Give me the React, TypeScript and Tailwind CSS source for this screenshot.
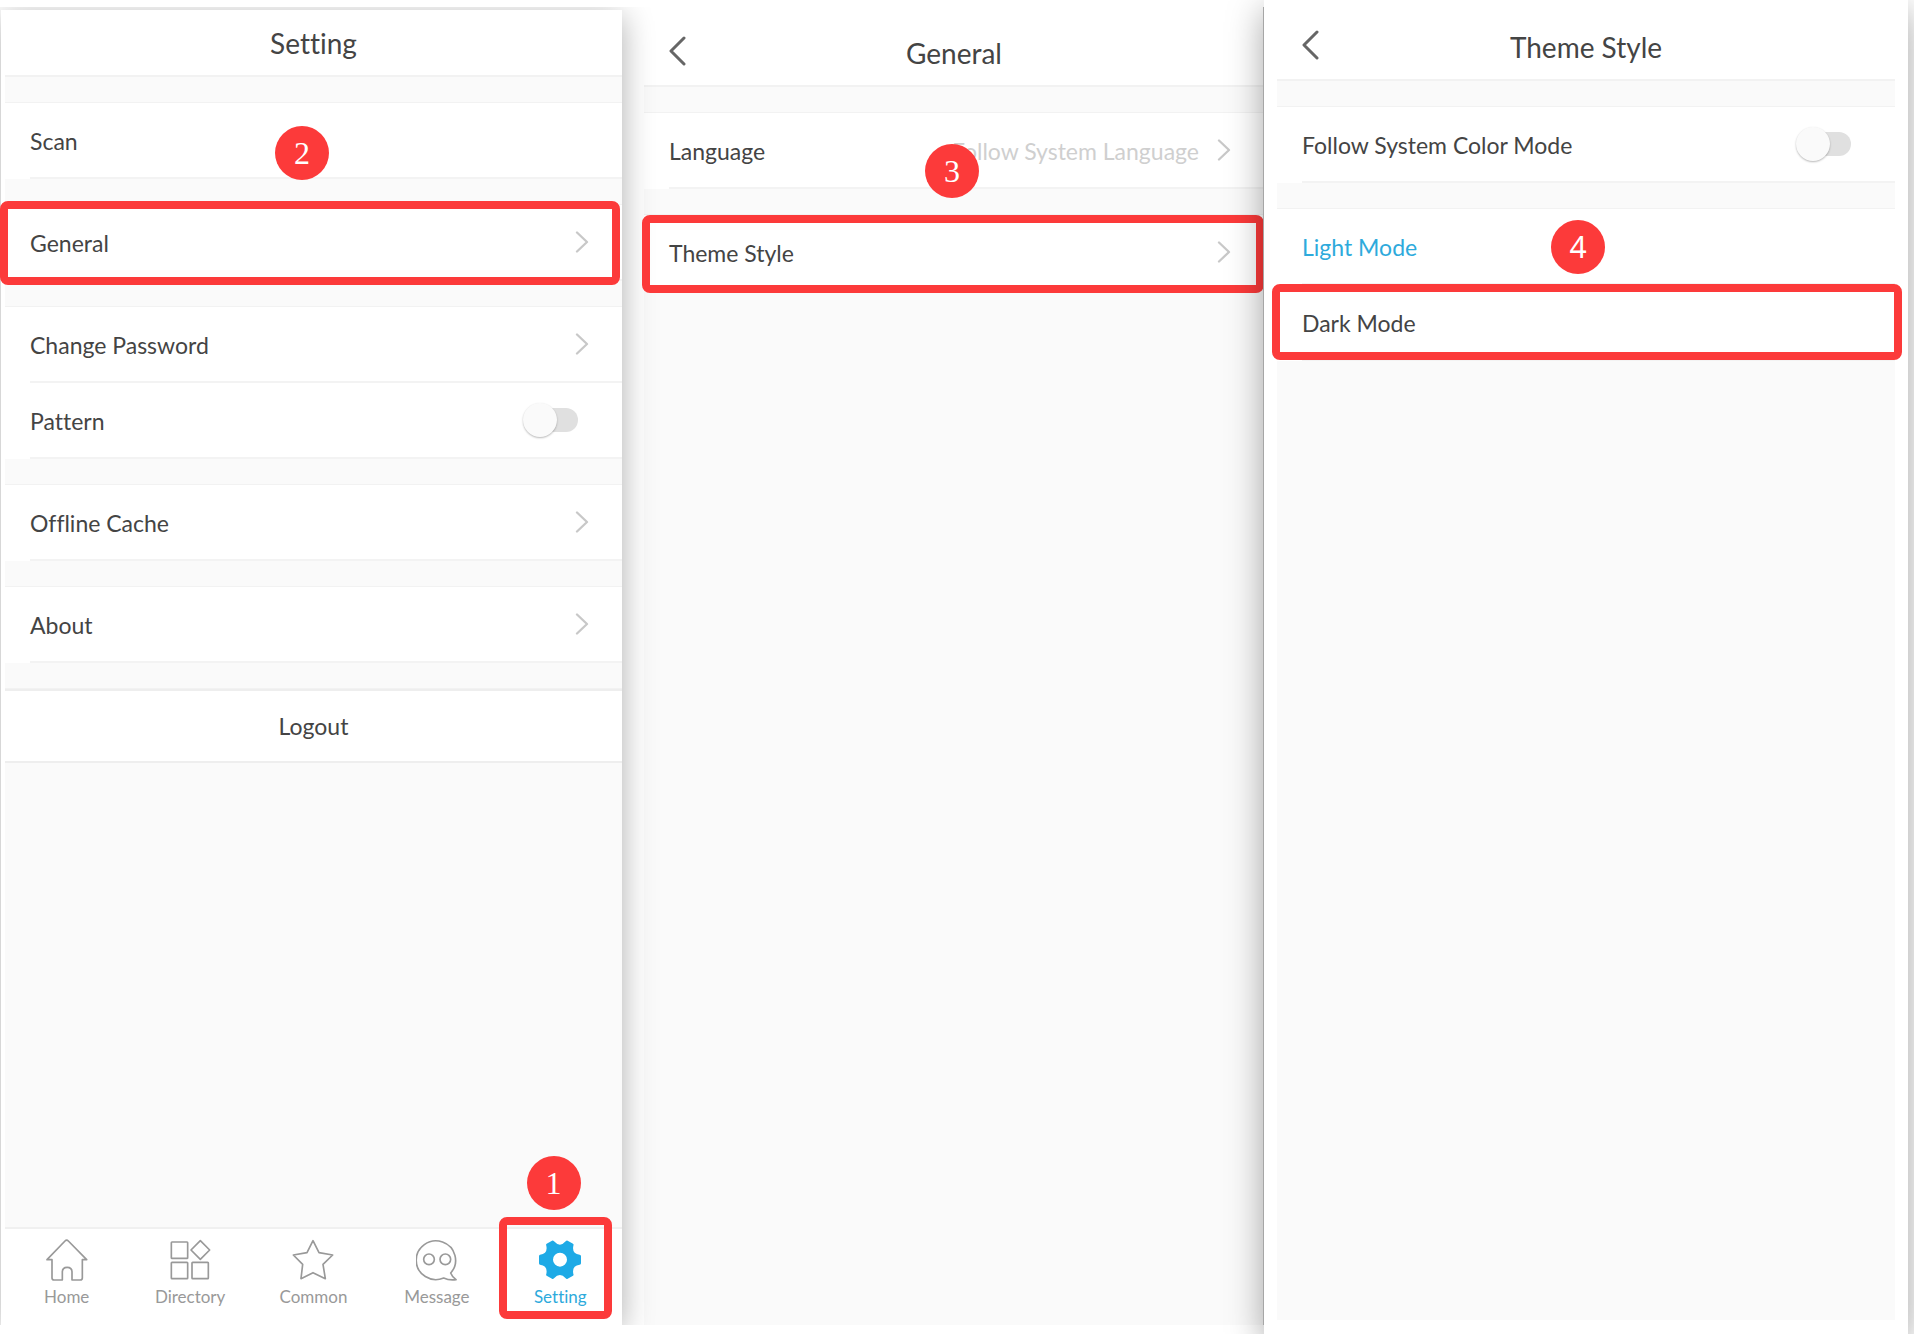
import type { ReactNode } from "react";

function ChevronRight() {
  return (
    <svg viewBox="0 0 14 22" className="h-[22px] w-[14px] shrink-0" fill="none" stroke="#c8c8c8" strokeWidth="2.3" strokeLinecap="round" strokeLinejoin="round" aria-hidden="true">
      <path d="M2 1.5 L12 11 L2 20.5" />
    </svg>
  );
}

function BackButton() {
  return (
    <button type="button" aria-label="Back" className="justify-self-start pb-1">
      <svg viewBox="0 0 18 30" className="block h-[30px] w-[18px]" fill="none" stroke="#666666" strokeWidth="3" strokeLinecap="round" strokeLinejoin="round" aria-hidden="true">
        <path d="M15 2 L2 15 L15 28" />
      </svg>
    </button>
  );
}

function Header({ title, back = false }: { title: string; back?: boolean }) {
  return (
    <header className="grid h-[67px] shrink-0 grid-cols-[1fr_auto_1fr] items-center border-b-2 border-[#f2f2f2] bg-white px-[25px]">
      {back ? <BackButton /> : <span />}
      <h2 className="text-[28px] leading-8">{title}</h2>
      <span />
    </header>
  );
}

function Gap() {
  return <div className="h-[26px] shrink-0 border-b border-[#f2f2f2]" />;
}

function Highlight({ className }: { className: string }) {
  return <span className={`pointer-events-none absolute z-10 rounded-lg border-8 border-[#fc3a3a] ${className}`} />;
}

function Step({ n, className, sans = false }: { n: number; className: string; sans?: boolean }) {
  return (
    <span
      className={`pointer-events-none absolute z-20 flex size-[54px] items-center justify-center rounded-full bg-[#fc3a3a] leading-none text-white ${
        sans ? "font-['Noto_Sans',sans-serif] text-[30px]" : "font-['Liberation_Serif',serif] text-[32px]"
      } ${className}`}
    >
      {n}
    </span>
  );
}

function Group({ children }: { children: ReactNode }) {
  return <div className="shrink-0 bg-white">{children}</div>;
}

type RowProps = { label: string; value?: string; arrow?: boolean; active?: boolean; children?: ReactNode };

function Row({ label, value, arrow = false, active = false, children }: RowProps) {
  return (
    <div className="relative pl-[25px]">
      <button type="button" className="flex h-[76px] w-full items-center justify-between border-b-2 border-[#f3f3f3] pr-[33px] text-left leading-8">
        <span className={active ? "pt-0.5 text-[#2eaadc]" : "pt-0.5"}>{label}</span>
        <span className="flex items-center gap-[18px] text-[#cfcfcf]">
          {value && <span className="pt-0.5">{value}</span>}
          {arrow && <ChevronRight />}
        </span>
      </button>
      {children}
    </div>
  );
}

function SwitchRow({ label }: { label: string }) {
  return (
    <div className="pl-[25px]">
      <label className="flex h-[76px] items-center justify-between border-b-2 border-[#f3f3f3] pr-11 leading-8">
        <span className="pt-0.5">{label}</span>
        <input
          type="checkbox"
          role="switch"
          className="relative h-6 w-[51px] appearance-none rounded-full bg-[#e0e0e0] before:absolute before:-top-[5px] before:-left-1 before:size-[34px] before:rounded-full before:bg-[#fafafa] before:shadow-[0_1px_2px_rgba(0,0,0,0.28)] before:content-['']"
        />
      </label>
    </div>
  );
}

const line = { fill: "none", stroke: "#999999", strokeWidth: 5, strokeLinejoin: "round", strokeLinecap: "round" } as const;

const tabs: { label: string; icon: ReactNode }[] = [
  {
    label: "Home",
    icon: <path {...line} d="M3 62 L57 6 Q62 1 67 6 L122 62 H109 V117 Q109 123 103 123 H78 V99 Q78 85 63.5 85 Q49 85 49 99 V123 H24 Q18 123 18 117 V62 Z" />,
  },
  {
    label: "Directory",
    icon: (
      <g {...line}>
        <rect x="7" y="9" width="49" height="49" rx="2" />
        <rect x="7" y="70" width="49" height="49" rx="2" />
        <rect x="69" y="70" width="49" height="49" rx="2" />
        <path d="M94 5 L122 33 L94 61 L66 33 Z" />
      </g>
    ),
  },
  {
    label: "Common",
    icon: <path {...line} d="M63 5 L81 41 L122 48 L93 76 L100 119 L63 101 L27 119 L32 76 L4 48 L45 41 Z" />,
  },
  {
    label: "Message",
    icon: (
      <g {...line}>
        <path d="M83 117 A59 58 0 1 1 104 102 Q108 113 120 122 Q100 125 83 117 Z" />
        <circle cx="39" cy="61" r="16" />
        <circle cx="88" cy="61" r="16" />
      </g>
    ),
  },
  {
    label: "Setting",
    icon: (
      <path
        fill="#1eaae6"
        fillRule="evenodd"
        d="M45 7 Q63 27 80 7 Q83 3 86 5 L102 14 Q105 16 103 20 Q98 45 122 47 Q126 48 126 52 V73 Q126 77 122 77 Q98 80 103 105 Q105 108 102 110 L86 119 Q83 122 80 118 Q63 98 45 118 Q42 122 39 119 L23 110 Q20 108 22 105 Q27 80 3 77 Q0 77 0 73 V52 Q0 48 3 47 Q27 45 22 20 Q20 16 23 14 L39 5 Q42 3 45 7 Z M63 41 A21 21 0 1 0 63 83 A21 21 0 1 0 63 41 Z"
      />
    ),
  },
];

function TabBar() {
  return (
    <nav className="grid h-[98px] shrink-0 grid-cols-5 border-t-2 border-[#f0f0f0] bg-white">
      {tabs.map(({ label, icon }) => {
        const current = label === "Setting";
        return (
          <div key={label} className="relative">
            <button type="button" aria-current={current ? "page" : undefined} className="flex w-full flex-col items-center gap-1 pt-2.5">
              <svg viewBox="0 0 126 126" className="size-[42px]" aria-hidden="true">{icon}</svg>
              <span className={`text-[17px] leading-6 ${current ? "text-[#2eaadc]" : "text-[#999999]"}`}>{label}</span>
            </button>
            {current && (
              <>
                <Highlight className="-top-3 right-2.5 bottom-1.5 left-0" />
                <Step n={1} className="-top-[73px] left-7" />
              </>
            )}
          </div>
        );
      })}
    </nav>
  );
}

export default function App() {
  return (
    <main className="grid min-h-screen grid-cols-[644fr_620fr_650fr] overflow-x-clip bg-white font-['Lato','Liberation_Sans',sans-serif] text-[23px] text-[#444444] [font-variant-ligatures:none]">
      <section className="relative z-10 mt-[7px] mb-[9px] flex flex-col overflow-y-clip pt-[3px] pr-[22px] pl-px">
        <div className="flex grow flex-col bg-white pl-1 shadow-[0_6px_30px_rgba(0,0,0,0.32)]">
          <Header title="Setting" />
          <div className="flex grow flex-col bg-[#fafafa]">
            <Gap />
            <Group>
              <Row label="Scan">
                <Step n={2} className="top-[23px] left-[270px]" />
              </Row>
            </Group>
            <Gap />
            <Group>
              <Row label="General" arrow>
                <Highlight className="-top-1 right-0.5 -bottom-1 -left-[5px]" />
              </Row>
            </Group>
            <Gap />
            <Group>
              <Row label="Change Password" arrow />
              <SwitchRow label="Pattern" />
            </Group>
            <Gap />
            <Group>
              <Row label="Offline Cache" arrow />
            </Group>
            <Gap />
            <Group>
              <Row label="About" arrow />
            </Group>
            <Gap />
            <button type="button" className="h-[74px] shrink-0 border-y-2 border-[#eeeeee] bg-white">Logout</button>
          </div>
          <TabBar />
        </div>
      </section>

      <section className="mb-[9px] flex flex-col pt-5">
        <Header title="General" back />
        <div className="flex grow flex-col bg-[#fafafa]">
          <Gap />
          <Group>
            <Row label="Language" value="Follow System Language" arrow>
              <Step n={3} className="top-[31px] left-[281px]" />
            </Row>
          </Group>
          <Gap />
          <Group>
            <Row label="Theme Style" arrow>
              <Highlight className="top-0 right-0 -bottom-0.5 -left-0.5" />
            </Row>
          </Group>
        </div>
      </section>

      <section className="relative z-20 mr-1.5 flex flex-col bg-white px-[13px] pt-3.5 pb-3.5 shadow-[0_10px_34px_rgba(0,0,0,0.36)]">
        <span className="absolute top-[7px] bottom-[9px] -left-px w-px bg-[#a6a6a6]" />
        <Header title="Theme Style" back />
        <div className="flex grow flex-col bg-[#fafafa]">
          <Gap />
          <Group>
            <SwitchRow label="Follow System Color Mode" />
          </Group>
          <Gap />
          <Group>
            <Row label="Light Mode" active>
              <Step n={4} sans className="top-[11px] left-[274px]" />
            </Row>
            <Row label="Dark Mode">
              <Highlight className="-top-px -right-[7px] bottom-px -left-[5px]" />
            </Row>
          </Group>
        </div>
      </section>
    </main>
  );
}
